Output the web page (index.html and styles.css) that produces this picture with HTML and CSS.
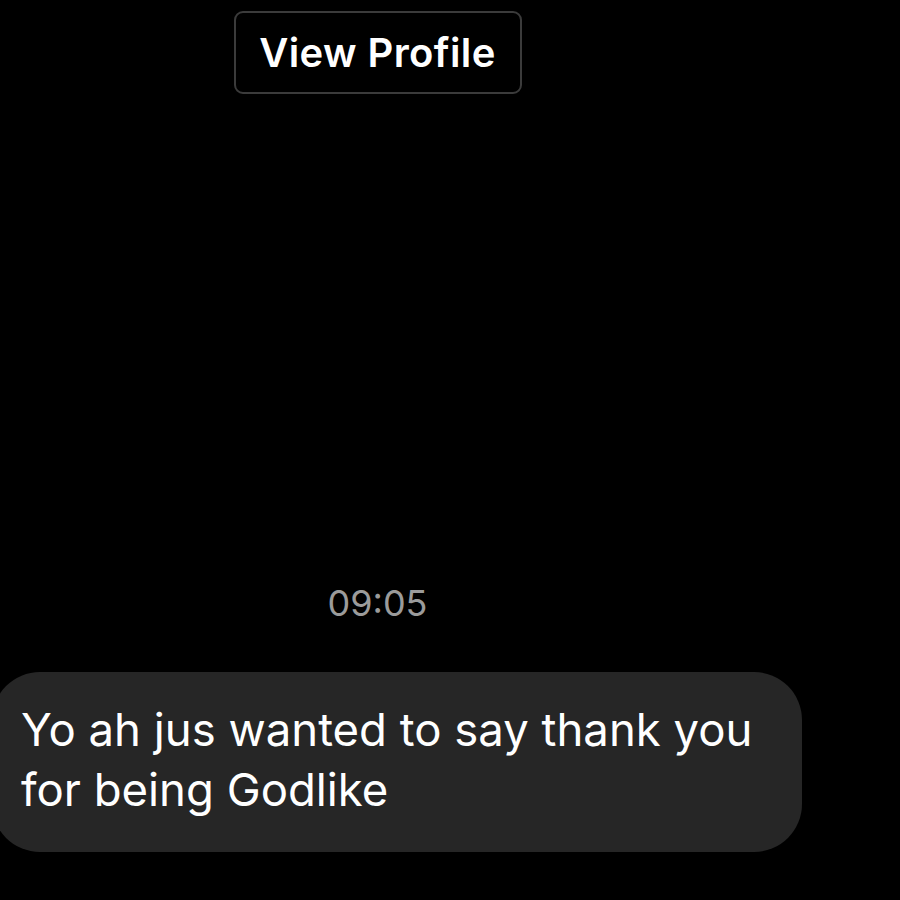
FILE: index.html
```html
<!DOCTYPE html>
<html lang="en">
<head>
<meta charset="UTF-8">
<meta name="viewport" content="width=device-width, initial-scale=1.0">
<title>Chat</title>
<link rel="stylesheet" href="styles.css">
</head>
<body>
<div class="thread">
  <div class="profile-row">
    <button class="profile-btn">View Profile</button>
  </div>
  <div class="timestamp">09:05</div>
  <div class="bubble">Yo ah jus wanted to say thank you for being Godlike</div>
</div>
</body>
</html>
```

FILE: styles.css
```css
body {
  margin: 0;
  padding: 0;
  background-color: #000;
  color: #fff;
  font-family: Inter, "Noto Sans", sans-serif;
  height: 900px;
  overflow: hidden;
}

.thread {
  width: 755px;
  display: flex;
  flex-direction: column;
}

.profile-row {
  display: flex;
  justify-content: center;
  padding-top: 11px;
}

.profile-btn {
  width: 288px;
  height: 83px;
  background: #000;
  color: #fff;
  border: 2px solid #3b3b3b;
  border-radius: 9px;
  font-family: Inter, "Noto Sans", sans-serif;
  font-size: 40px;
  font-weight: 600;
  letter-spacing: 0.4px;
  padding: 0;
}

.timestamp {
  margin-top: 487px;
  text-align: center;
  color: #9b9b9b;
  font-size: 36px;
  line-height: 44px;
}

.bubble {
  margin-top: 47px;
  margin-left: -8px;
  width: 810px;
  box-sizing: border-box;
  height: 180px;
  padding: 28px 30px 0 29px;
  background-color: #262626;
  border-radius: 48px;
  font-size: 45.5px;
  line-height: 60px;
}
```
